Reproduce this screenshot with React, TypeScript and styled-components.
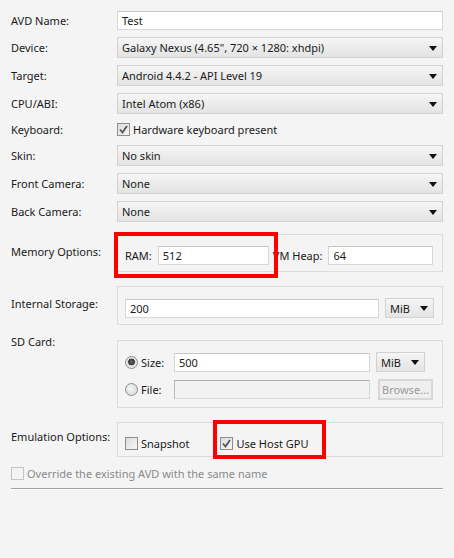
import React from 'react'
import styled, { createGlobalStyle } from 'styled-components'

const GlobalStyle = createGlobalStyle`
  html, body {
    margin: 0;
    background: #f4f4f4;
  }
  body {
    font-family: 'Noto Sans', 'Open Sans', sans-serif;
    font-size: 11px;
    color: #1a1a1a;
  }
`

const Page = styled.div`
  width: 454px;
  height: 558px;
  box-sizing: border-box;
  padding: 11px 11px 0 11px;
  display: flex;
  flex-direction: column;
`

const Row = styled.div<{ $gap?: number }>`
  display: grid;
  grid-template-columns: 106px 326px;
  align-items: start;
  margin-top: ${(p) => p.$gap ?? 0}px;
`

const Label = styled.div<{ $top?: number; $h?: number }>`
  line-height: 16px;
  margin-top: ${(p) => p.$top ?? 0}px;
  height: ${(p) => (p.$h ? `${p.$h}px` : 'auto')};
  display: flex;
  align-items: center;
  white-space: nowrap;
`

const TextField = styled.div<{ $w?: number; $disabled?: boolean }>`
  box-sizing: border-box;
  height: 19px;
  width: ${(p) => (p.$w ? `${p.$w}px` : 'auto')};
  flex: ${(p) => (p.$w ? 'none' : '1')};
  background: ${(p) => (p.$disabled ? '#f2f2f2' : '#fff')};
  border: 1px solid #d6d6d6;
  border-top-color: ${(p) => (p.$disabled ? '#ababab' : '#c6c6c6')};
  border-left-color: ${(p) => (p.$disabled ? '#b8b8b8' : '#d6d6d6')};
  padding: 0 4px;
  line-height: 17px;
  white-space: nowrap;
  overflow: hidden;
`

const Select = styled.div<{ $w?: number; $h?: number }>`
  box-sizing: border-box;
  height: ${(p) => p.$h ?? 21}px;
  width: ${(p) => (p.$w ? `${p.$w}px` : 'auto')};
  flex: none;
  display: flex;
  align-items: center;
  justify-content: space-between;
  padding: 0 5px 0 4px;
  border: 1px solid #d2d2d2;
  background: linear-gradient(#f6f6f6, #ebebeb 55%, #e4e4e4);
  white-space: nowrap;
`

const Arrow = styled.span`
  width: 0;
  height: 0;
  border-left: 4px solid transparent;
  border-right: 4px solid transparent;
  border-top: 5px solid #111;
  margin-top: 1px;
`

const CheckRow = styled.div<{ $h?: number }>`
  display: flex;
  align-items: center;
  gap: 3px;
  height: ${(p) => p.$h ?? 17}px;
  white-space: nowrap;
  position: relative;
`

const Box = styled.span<{ $disabled?: boolean }>`
  box-sizing: border-box;
  width: 13px;
  height: 13px;
  flex: none;
  border: 1px solid ${(p) => (p.$disabled ? '#c4c4c4' : '#8f8f8f')};
  background: ${(p) => (p.$disabled ? '#f4f4f4' : 'linear-gradient(135deg, #dcdcdc, #f6f6f6)')};
  display: flex;
  align-items: center;
  justify-content: center;
`

const Radio = styled.span<{ $on?: boolean }>`
  box-sizing: border-box;
  width: 13px;
  height: 13px;
  flex: none;
  border-radius: 50%;
  border: 1px solid #8c8c8c;
  background: ${(p) =>
    p.$on
      ? 'radial-gradient(circle at 50% 45%, #6e6e6e 0, #3a3a3a 2.5px, #4a4a4a 3.2px, #d8d8d8 3.6px, #f0f0f0 6px)'
      : 'radial-gradient(circle at 40% 40%, #f7f7f7, #d2d2d2)'};
`

const Muted = styled.span`
  color: #8a8a8a;
`

const Group = styled.div<{ $pt?: number; $pb?: number; $pr?: number }>`
  box-sizing: border-box;
  border: 1px solid #dcdcdc;
  padding: ${(p) => p.$pt ?? 11}px ${(p) => p.$pr ?? 8}px ${(p) => p.$pb ?? 6}px 7px;
  display: flex;
  flex-direction: column;
  gap: 7px;
`

const Line = styled.div<{ $gap?: number }>`
  display: flex;
  align-items: center;
  gap: ${(p) => p.$gap ?? 6}px;
  white-space: nowrap;
`

const SdGrid = styled.div`
  display: grid;
  grid-template-columns: 49px 196px auto;
  align-items: center;
  row-gap: 7px;
`

const RadioLabel = styled.div`
  display: flex;
  align-items: center;
  gap: 3px;
`

const Right = styled.div<{ $ml?: number }>`
  margin-left: ${(p) => p.$ml ?? 6}px;
  white-space: nowrap;
`

const BrowseBtn = styled.div`
  box-sizing: border-box;
  width: 55px;
  height: 21px;
  margin-left: 8px;
  border: 2px solid #d8d8d8;
  background: #efefef;
  color: #9a9a9a;
  display: flex;
  align-items: center;
  justify-content: center;
`

const Highlight = styled.div<{ $l: number; $t: number; $w: number; $h: number }>`
  position: absolute;
  left: ${(p) => p.$l}px;
  top: ${(p) => p.$t}px;
  width: ${(p) => p.$w}px;
  height: ${(p) => p.$h}px;
  box-sizing: border-box;
  border: 4px solid #ff0000;
  pointer-events: none;
`

const Anchor = styled.div`
  position: relative;
  display: flex;
  align-items: center;
`

const Separator = styled.div`
  margin-top: 7px;
  height: 1px;
  width: 432px;
  background: #a3a3a3;
  box-shadow: 0 1px 0 #ffffff;
`

function Check() {
  return (
    <svg width="9" height="9" viewBox="0 0 9 9">
      <path d="M1 4.5 L3.5 7.5 L8 1" fill="none" stroke="#555" strokeWidth="1.8" />
    </svg>
  )
}

function Dropdown({ value, w, h }: { value: string; w?: number; h?: number }) {
  return (
    <Select $w={w} $h={h}>
      <span>{value}</span>
      <Arrow />
    </Select>
  )
}

export default function App() {
  return (
    <>
      <GlobalStyle />
      <Page>
        <Row>
          <Label $h={19}>AVD Name:</Label>
          <TextField>Test</TextField>
        </Row>
        <Row $gap={7}>
          <Label $h={21}>Device:</Label>
          <Dropdown value={'Galaxy Nexus (4.65", 720 \u00d7 1280: xhdpi)'} />
        </Row>
        <Row $gap={7}>
          <Label $h={21}>Target:</Label>
          <Dropdown value="Android 4.4.2 - API Level 19" />
        </Row>
        <Row $gap={7}>
          <Label $h={21}>CPU/ABI:</Label>
          <Dropdown value="Intel Atom (x86)" />
        </Row>
        <Row $gap={7}>
          <Label $h={17}>Keyboard:</Label>
          <CheckRow>
            <Box>
              <Check />
            </Box>
            Hardware keyboard present
          </CheckRow>
        </Row>
        <Row $gap={7}>
          <Label $h={21}>Skin:</Label>
          <Dropdown value="No skin" />
        </Row>
        <Row $gap={7}>
          <Label $h={21}>Front Camera:</Label>
          <Dropdown value="None" />
        </Row>
        <Row $gap={7}>
          <Label $h={21}>Back Camera:</Label>
          <Dropdown value="None" />
        </Row>

        <Row $gap={12}>
          <Label $top={10}>Memory Options:</Label>
          <Group>
            <Line>
              <Anchor>
                RAM:
                <Highlight $l={-11} $t={-16} $w={164} $h={46} />
              </Anchor>
              <TextField $w={111}>512</TextField>
              <Right $ml={-2}>VM Heap:</Right>
              <TextField $w={105}>64</TextField>
            </Line>
          </Group>
        </Row>

        <Row $gap={14}>
          <Label $top={10}>Internal Storage:</Label>
          <Group $pt={11} $pb={6}>
            <Line>
              <TextField>200</TextField>
              <Dropdown value="MiB" w={49} h={20} />
            </Line>
          </Group>
        </Row>

        <Row $gap={15}>
          <Label $top={-6}>SD Card:</Label>
          <Group $pt={11} $pb={7} $pr={9}>
            <SdGrid>
              <RadioLabel>
                <Radio $on />
                Size:
              </RadioLabel>
              <TextField>500</TextField>
              <Right>
                <Dropdown value="MiB" w={49} h={20} />
              </Right>
              <RadioLabel>
                <Radio />
                File:
              </RadioLabel>
              <TextField $disabled />
              <BrowseBtn>Browse...</BrowseBtn>
            </SdGrid>
          </Group>
        </Row>

        <Row $gap={14}>
          <Label $top={7}>Emulation Options:</Label>
          <Group $pt={12} $pb={4}>
            <Line $gap={0}>
              <CheckRow>
                <Box />
                Snapshot
              </CheckRow>
              <CheckRow style={{ marginLeft: 31 }}>
                <Box>
                  <Check />
                </Box>
                Use Host GPU
                <Highlight $l={-7} $t={-15} $w={113} $h={39} />
              </CheckRow>
            </Line>
          </Group>
        </Row>

        <CheckRow $h={16} style={{ marginTop: 8 }}>
          <Box $disabled />
          <Muted>Override the existing AVD with the same name</Muted>
        </CheckRow>
        <Separator />
      </Page>
    </>
  )
}
